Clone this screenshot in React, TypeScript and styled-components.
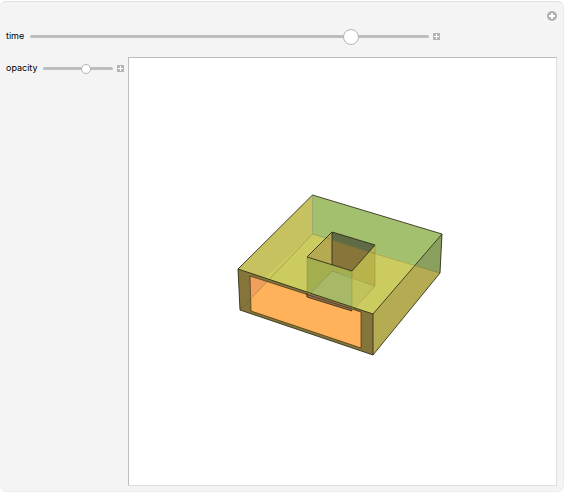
import React from "react";
import styled, { createGlobalStyle } from "styled-components";

const GlobalStyle = createGlobalStyle`
  *, *::before, *::after { box-sizing: border-box; }
  body {
    margin: 0;
    background: #fff;
    color: #000;
    font-family: Inter, "Open Sans", sans-serif;
    font-size: 9px;
    line-height: 12px;
  }
`;

const Panel = styled.main`
  margin-top: 1px;
  padding: 9px 6px 5px;
  background: #f4f4f4;
  border: 1px solid #ececec;
  border-top: 1px solid #e0e0e0;
  border-left: 0;
  border-radius: 6px;
`;

const Toolbar = styled.header`
  display: flex;
  justify-content: flex-end;
`;

const IconButton = styled.button`
  display: flex;
  flex: none;
  padding: 0;
  border: 0;
  background: none;
  cursor: pointer;
`;

const TimeArea = styled.div`
  padding-top: 4px;
`;

const ControlRow = styled.div<{ $wide?: boolean }>`
  display: flex;
  align-items: center;
  gap: 4px;
  width: ${(p) => (p.$wide ? "calc(100% - 117px)" : "118px")};
  height: 22px;
  flex: none;
`;

const Label = styled.label<{ $wide?: boolean }>`
  flex: none;
  width: ${(p) => (p.$wide ? "20px" : "33px")};
`;

const Slider = styled.input<{ $thumb: number }>`
  appearance: none;
  flex: 1;
  min-width: 0;
  height: 18px;
  margin: 0;
  background: transparent;

  &::-webkit-slider-runnable-track {
    height: 3px;
    border-radius: 2px;
    background: #bdbdbd;
  }

  &::-webkit-slider-thumb {
    appearance: none;
    width: ${(p) => p.$thumb}px;
    height: ${(p) => p.$thumb}px;
    margin-top: ${(p) => (4 - p.$thumb) / 2}px;
    border: 1px solid #b4b4b4;
    border-radius: 50%;
    background: #fff;
  }
`;

const Body = styled.div`
  display: flex;
  align-items: flex-start;
  gap: 4px;
  margin-top: 10px;
`;

const Stage = styled.section`
  flex: 1;
  min-width: 0;
  background: #fff;
  border: 1px solid #dedede;
  border-top-color: #bdbdbd;
  border-left-color: #bdbdbd;
`;

const Drawing = styled.svg`
  display: block;
  width: 100%;
  height: auto;
`;

const SquarePlus = () => (
  <svg width="7" height="7" viewBox="0 0 7 7" aria-hidden="true">
    <path d="M0 0H7V7H0Z" fill="#b5b5b5" />
    <path d="M3.5 1V6M1 3.5H6" stroke="#fff" strokeWidth="1" />
  </svg>
);

const RoundPlus = () => (
  <svg width="10" height="10" viewBox="0 0 10 10" aria-hidden="true">
    <circle cx="5" cy="5" r="5" fill="#b0b0b0" />
    <path d="M5 2V8M2 5H8" stroke="#fff" strokeWidth="2" />
  </svg>
);

const faces: [string, string][] = [
  ["312.5,195 238,269 240,310 312.5,234", "#c6c25f"],
  ["312.5,234 415,265 373,314 263,279", "#cccb60"],
  ["312.5,234 268,281 373,314 415,265", "#cccb60"],
  ["312.5,195 442,234 415,265 312.5,234", "#a3c06f"],
  ["442,234 373,314 373,355 440,273", "#b4ab52"],
  ["442,234 440,273 415,265", "#8aa05f"],
  ["238,269 373,314 373,355 240,310", "#86753a"],
  ["250,276 361,312 361,348 251,311", "#ffb25a"],
  ["250,276 267,282 250,299", "#f0a05c"],
  ["307,257 352,271 352,307 307,292", "#a3ae4f"],
  ["332,271 352,277 352,307 307,292 307,297", "#a7b967"],
  ["375,245 352,271 352,307 375,286", "#b9b34c"],
  ["352,277 375,286 352,309", "#c0c35b"],
  ["332,232 375,245 352,271 307,257", "#87753a"],
  ["332,232 332,265 307,257", "#b5a951"],
  ["332,232 375,245 369,252 332,240", "#5e6b44"],
  ["307,293 352,308 352,311 307,297", "#99704d"],
];

const Scene = () => (
  <Drawing viewBox="129 58 427 427" role="img" aria-label="Translucent box with a square opening">
    {faces.map(([points, fill], i) => (
      <polygon key={i} points={points} fill={fill} />
    ))}
    <g fill="none" stroke="#4c5528" strokeOpacity=".4" strokeWidth=".8">
      <path d="M312.5 195V234L330 239M370 252L440 273M312.5 234L240 310" />
      <path d="M307 257V297L332 271L375 286L352 311V271M375 245V286" strokeOpacity=".3" />
    </g>
    <g fill="none" stroke="#2c2b16" strokeOpacity=".85" strokeWidth="1" strokeLinejoin="round">
      <path d="M312.5 195L442 234L373 314L238 269Z" />
      <path d="M238 269L240 310L373 355V314M373 355L440 273L442 234" />
      <path d="M250 276L361 312V348L251 311Z" strokeOpacity=".65" />
      <path d="M332 232L375 245L352 271L307 257ZM332 232V265" />
      <path d="M307 293V297L352 311" />
    </g>
  </Drawing>
);

export default function App() {
  return (
    <>
      <GlobalStyle />
      <Panel>
        <Toolbar>
          <IconButton type="button" aria-label="Options">
            <RoundPlus />
          </IconButton>
        </Toolbar>
        <TimeArea>
          <ControlRow $wide>
            <Label $wide htmlFor="time">time</Label>
            <Slider id="time" type="range" min="0" max="1000" defaultValue="817" $thumb={16} />
            <IconButton type="button" aria-label="Expand time controls">
              <SquarePlus />
            </IconButton>
          </ControlRow>
        </TimeArea>
        <Body>
          <ControlRow>
            <Label htmlFor="opacity">opacity</Label>
            <Slider id="opacity" type="range" min="0" max="1000" defaultValue="635" $thumb={10} />
            <IconButton type="button" aria-label="Expand opacity controls">
              <SquarePlus />
            </IconButton>
          </ControlRow>
          <Stage>
            <Scene />
          </Stage>
        </Body>
      </Panel>
    </>
  );
}
